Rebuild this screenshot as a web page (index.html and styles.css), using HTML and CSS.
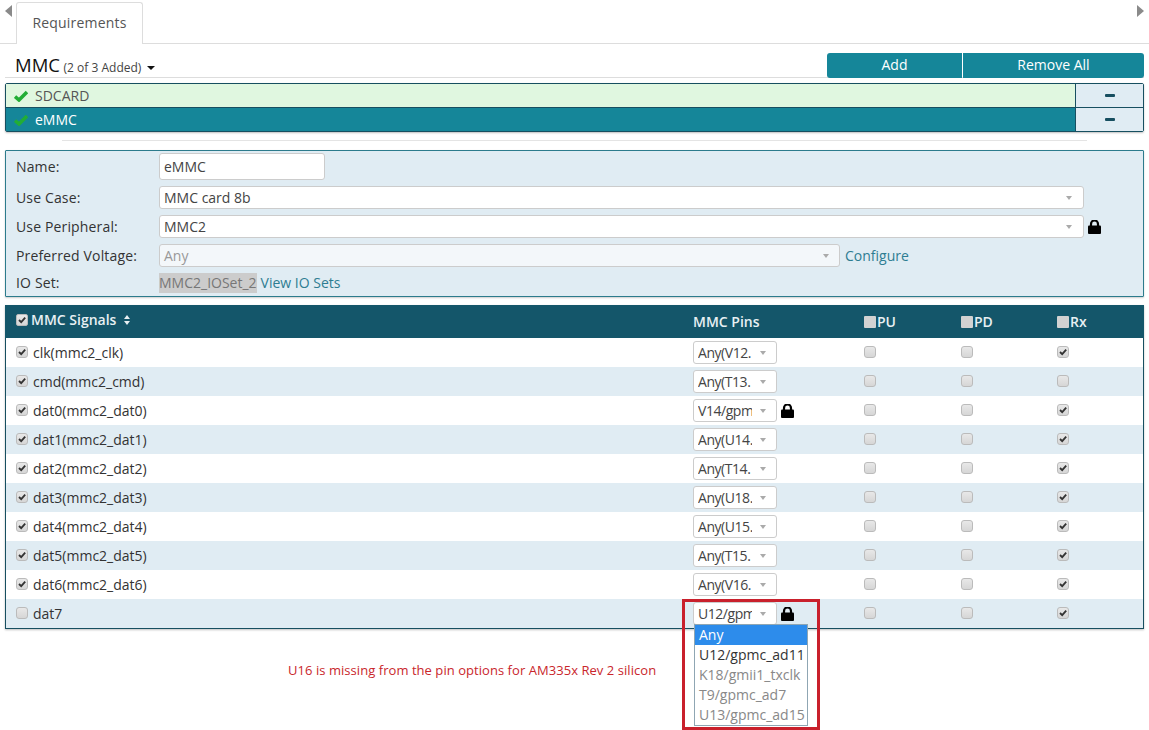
FILE: index.html
```html
<!DOCTYPE html>
<html lang="en">
<head>
<meta charset="utf-8">
<title>Requirements</title>
<link rel="stylesheet" href="styles.css">
</head>
<body>
<nav class="tabs">
  <span class="arrow arrow-left"></span>
  <div class="tab">Requirements</div>
  <span class="arrow arrow-right"></span>
</nav>

<main class="page">
  <header class="title-row">
    <div class="title"><span class="title-main">MMC</span> <span class="title-sub">(2 of 3 Added)</span><span class="caret"></span></div>
    <div class="actions">
      <button class="btn btn-add">Add</button>
      <button class="btn btn-remove">Remove All</button>
    </div>
  </header>

  <section class="list">
    <div class="list-row ok">
      <div class="list-name"><svg class="tick" viewBox="0 0 14 12"><path d="M1 6.5 L5 10 L13 2" fill="none" stroke="#22ad36" stroke-width="3.6"/></svg>SDCARD</div>
      <div class="list-minus"><span class="minus"></span></div>
    </div>
    <div class="list-row selected">
      <div class="list-name"><svg class="tick" viewBox="0 0 14 12"><path d="M1 6.5 L5 10 L13 2" fill="none" stroke="#22ad36" stroke-width="3.6"/></svg>eMMC</div>
      <div class="list-minus"><span class="minus"></span></div>
    </div>
  </section>

  <hr class="divider">

  <section class="form">
    <label class="form-label label-top">Name:</label>
    <div class="form-field field-top"><div class="text-input">eMMC</div></div>
    <label class="form-label">Use Case:</label>
    <div class="form-field"><div class="select wide">MMC card 8b<span class="sel-caret"></span></div></div>
    <label class="form-label">Use Peripheral:</label>
    <div class="form-field"><div class="select wide">MMC2<span class="sel-caret"></span></div><svg class="lock" viewBox="0 0 13 14"><path d="M3 6.5V4a3.5 3.5 0 0 1 7 0V6.5" fill="none" stroke="#000" stroke-width="2.2"/><rect y="5.5" width="13" height="8.5" rx="1" fill="#000"/></svg></div>
    <label class="form-label">Preferred Voltage:</label>
    <div class="form-field"><div class="select volt disabled">Any<span class="sel-caret"></span></div><a class="link configure">Configure</a></div>
    <label class="form-label">IO Set:</label>
    <div class="form-field"><span class="ioset-value">MMC2_IOSet_2</span><a class="link view-sets">View IO Sets</a></div>
  </section>

  <section class="signals">
    <div class="sig-head">
      <div class="c-name head-name"><input type="checkbox" class="cb head-cb" checked>MMC Signals<span class="sort"><i class="up"></i><i class="down"></i></span></div>
      <div class="c-pin">MMC Pins</div>
      <div class="c-flag"><span class="head-box"></span>PU</div>
      <div class="c-flag"><span class="head-box"></span>PD</div>
      <div class="c-flag"><span class="head-box"></span>Rx</div>
    </div>

    <div class="sig-row">
      <div class="c-name"><input type="checkbox" class="cb" checked>clk(mmc2_clk)</div>
      <div class="c-pin"><div class="select pin"><span class="pin-text">Any(V12.</span><span class="sel-caret"></span></div></div>
      <div class="c-flag"><input type="checkbox" class="cb"></div>
      <div class="c-flag"><input type="checkbox" class="cb"></div>
      <div class="c-flag"><input type="checkbox" class="cb" checked></div>
    </div>
    <div class="sig-row">
      <div class="c-name"><input type="checkbox" class="cb" checked>cmd(mmc2_cmd)</div>
      <div class="c-pin"><div class="select pin"><span class="pin-text">Any(T13.</span><span class="sel-caret"></span></div></div>
      <div class="c-flag"><input type="checkbox" class="cb"></div>
      <div class="c-flag"><input type="checkbox" class="cb"></div>
      <div class="c-flag"><input type="checkbox" class="cb"></div>
    </div>
    <div class="sig-row">
      <div class="c-name"><input type="checkbox" class="cb" checked>dat0(mmc2_dat0)</div>
      <div class="c-pin"><div class="select pin"><span class="pin-text">V14/gpmc</span><span class="sel-caret"></span></div><svg class="lock" viewBox="0 0 13 14"><path d="M3 6.5V4a3.5 3.5 0 0 1 7 0V6.5" fill="none" stroke="#000" stroke-width="2.2"/><rect y="5.5" width="13" height="8.5" rx="1" fill="#000"/></svg></div>
      <div class="c-flag"><input type="checkbox" class="cb"></div>
      <div class="c-flag"><input type="checkbox" class="cb"></div>
      <div class="c-flag"><input type="checkbox" class="cb" checked></div>
    </div>
    <div class="sig-row">
      <div class="c-name"><input type="checkbox" class="cb" checked>dat1(mmc2_dat1)</div>
      <div class="c-pin"><div class="select pin"><span class="pin-text">Any(U14.</span><span class="sel-caret"></span></div></div>
      <div class="c-flag"><input type="checkbox" class="cb"></div>
      <div class="c-flag"><input type="checkbox" class="cb"></div>
      <div class="c-flag"><input type="checkbox" class="cb" checked></div>
    </div>
    <div class="sig-row">
      <div class="c-name"><input type="checkbox" class="cb" checked>dat2(mmc2_dat2)</div>
      <div class="c-pin"><div class="select pin"><span class="pin-text">Any(T14.</span><span class="sel-caret"></span></div></div>
      <div class="c-flag"><input type="checkbox" class="cb"></div>
      <div class="c-flag"><input type="checkbox" class="cb"></div>
      <div class="c-flag"><input type="checkbox" class="cb" checked></div>
    </div>
    <div class="sig-row">
      <div class="c-name"><input type="checkbox" class="cb" checked>dat3(mmc2_dat3)</div>
      <div class="c-pin"><div class="select pin"><span class="pin-text">Any(U18.</span><span class="sel-caret"></span></div></div>
      <div class="c-flag"><input type="checkbox" class="cb"></div>
      <div class="c-flag"><input type="checkbox" class="cb"></div>
      <div class="c-flag"><input type="checkbox" class="cb" checked></div>
    </div>
    <div class="sig-row">
      <div class="c-name"><input type="checkbox" class="cb" checked>dat4(mmc2_dat4)</div>
      <div class="c-pin"><div class="select pin"><span class="pin-text">Any(U15.</span><span class="sel-caret"></span></div></div>
      <div class="c-flag"><input type="checkbox" class="cb"></div>
      <div class="c-flag"><input type="checkbox" class="cb"></div>
      <div class="c-flag"><input type="checkbox" class="cb" checked></div>
    </div>
    <div class="sig-row">
      <div class="c-name"><input type="checkbox" class="cb" checked>dat5(mmc2_dat5)</div>
      <div class="c-pin"><div class="select pin"><span class="pin-text">Any(T15.</span><span class="sel-caret"></span></div></div>
      <div class="c-flag"><input type="checkbox" class="cb"></div>
      <div class="c-flag"><input type="checkbox" class="cb"></div>
      <div class="c-flag"><input type="checkbox" class="cb" checked></div>
    </div>
    <div class="sig-row">
      <div class="c-name"><input type="checkbox" class="cb" checked>dat6(mmc2_dat6)</div>
      <div class="c-pin"><div class="select pin"><span class="pin-text">Any(V16.</span><span class="sel-caret"></span></div></div>
      <div class="c-flag"><input type="checkbox" class="cb"></div>
      <div class="c-flag"><input type="checkbox" class="cb"></div>
      <div class="c-flag"><input type="checkbox" class="cb" checked></div>
    </div>
    <div class="sig-row">
      <div class="c-name"><input type="checkbox" class="cb">dat7</div>
      <div class="c-pin open-host">
        <div class="select pin"><span class="pin-text">U12/gpmc</span><span class="sel-caret"></span></div><svg class="lock" viewBox="0 0 13 14"><path d="M3 6.5V4a3.5 3.5 0 0 1 7 0V6.5" fill="none" stroke="#000" stroke-width="2.2"/><rect y="5.5" width="13" height="8.5" rx="1" fill="#000"/></svg>
        <ul class="menu">
          <li class="active">Any</li>
          <li>U12/gpmc_ad11</li>
          <li class="muted">K18/gmii1_txclk</li>
          <li class="muted">T9/gpmc_ad7</li>
          <li class="muted">U13/gpmc_ad15</li>
        </ul>
      </div>
      <div class="c-flag"><input type="checkbox" class="cb"></div>
      <div class="c-flag"><input type="checkbox" class="cb"></div>
      <div class="c-flag"><input type="checkbox" class="cb" checked></div>
    </div>
  </section>
</main>

<div class="note">U16 is missing from the pin options for AM335x Rev 2 silicon</div>
<div class="red-box"></div>
</body>
</html>
```
FILE: styles.css
```css
* { box-sizing: border-box; }
html, body { margin: 0; padding: 0; }
body {
  position: relative;
  width: 1149px;
  height: 730px;
  overflow: hidden;
  background: #fff;
  color: #333;
  font-family: "Open Sans", "Noto Sans", sans-serif;
  font-size: 14px;
  line-height: 20px;
}

/* tab strip */
.tabs {
  display: flex;
  height: 44px;
  padding: 2px 5px 0;
  border-bottom: 1px solid #ddd;
}
.arrow { width: 0; height: 0; margin-top: 3px; border-style: solid; border-color: transparent; }
.arrow-left { border-width: 6px 7px 6px 0; border-right-color: #8a8a8a; }
.arrow-right { margin-left: auto; border-width: 6px 0 6px 7px; border-left-color: #8a8a8a; }
.tab {
  width: 127px;
  height: 42px;
  margin-left: 4px;
  padding-top: 10px;
  text-align: center;
  letter-spacing: .2px;
  color: #555;
  background: #fff;
  border: 1px solid #ddd;
  border-bottom: 0;
  border-radius: 3px 3px 0 0;
}

.page { padding: 0 5px; }

/* title row */
.title-row {
  display: flex;
  justify-content: space-between;
  height: 34px;
  border-bottom: 1px solid #ddd;
}
.title { padding: 9px 0 0 10px; color: #222; white-space: nowrap; line-height: 24px; }
.title-main { font-size: 18.5px; color: #111; }
.title-sub { font-size: 12px; color: #444; }
.caret {
  display: inline-block;
  margin-left: 6px;
  vertical-align: 2px;
  border-style: solid;
  border-color: #111 transparent transparent;
  border-width: 4px 4px 0;
}
.actions { display: flex; align-self: flex-end; gap: 1px; margin-bottom: -1px; }
.btn {
  height: 25px;
  padding: 0 0 2px;
  border: 0;
  color: #fff;
  background: #158699;
  font: 14px "Open Sans", sans-serif;
}
.btn-add { width: 135px; border-radius: 3px 0 0 3px; }
.btn-remove { width: 181px; border-radius: 0 3px 3px 0; }

/* requirement list */
.list {
  margin-top: 5px;
  border: 1px solid #174f60;
  border-radius: 2px;
  box-shadow: 0 1px 2px rgba(0,0,0,.25);
}
.list-row { display: flex; height: 23px; }
.list-row + .list-row { height: 24px; border-top: 1px solid #174f60; }
.list-name { flex: 1; display: flex; align-items: center; padding-left: 8px; }
.tick { width: 14px; height: 12px; margin-right: 7px; }
.ok .list-name { background: #e0f7e0; color: #555; }
.selected .list-name { background: #158699; color: #fff; }
.list-minus {
  display: flex;
  align-items: center;
  justify-content: center;
  width: 68px;
  background: #e0ecf3;
  border-left: 1px solid #174f60;
}
.minus { width: 10px; height: 3px; background: #174f60; border-radius: 1px; }

.divider {
  height: 1px;
  margin: 8px 57px 9px;
  border: 0;
  background: #e4e4e4;
}

/* form */
.form {
  display: grid;
  grid-template-columns: 143px 1fr;
  grid-template-rows: 30px 29px 29px 29px 26px;
  height: 147px;
  padding: 2px 0 0 10px;
  background: #e0ecf3;
  border: 1px solid #2c7b8c;
  box-shadow: 0 1px 2px rgba(0,0,0,.2);
  border-radius: 1px;
}
.form-label { display: flex; align-items: center; color: #333; font-weight: 500; letter-spacing: .15px; }
.form-field { display: flex; align-items: center; }
.label-top { height: 27px; }
.field-top { align-items: flex-start; }
.text-input {
  width: 166px;
  height: 27px;
  padding: 3px 4px;
  background: #fff;
  border: 1px solid #ccc;
  border-radius: 3px;
  color: #444;
}
.select {
  position: relative;
  height: 23px;
  padding: 1px 4px;
  background: #fff;
  border: 1px solid #ccc;
  border-radius: 3px;
  color: #444;
  white-space: nowrap;
}
.wide { width: 925px; }
.volt { width: 681px; }
.disabled { background: #f3f7fa; color: #999; }
.sel-caret {
  position: absolute;
  top: 9px;
  right: 10px;
  border-style: solid;
  border-color: #aaa transparent transparent;
  border-width: 4px 3.5px 0;
}
.wide .sel-caret { right: 11px; }
.lock { width: 13px; height: 14px; margin-left: 4px; flex: none; }
.link { color: #2e7d92; }
.configure { margin-left: 5px; }
.view-sets { margin-left: 4px; }
.ioset-value { background: #ccc; color: #777; }

/* signals table */
.signals {
  margin-top: 8px;
  border: 1px solid #174f60;
  border-top: 0;
  box-shadow: 0 1px 2px rgba(0,0,0,.25);
}
.sig-head, .sig-row {
  display: grid;
  grid-template-columns: 687px 171px 97px 96px 1fr;
  align-items: center;
}
.sig-head {
  height: 33px;
  margin: 0 -1px;
  padding-left: 1px;
  background: #14566a;
  color: #e8f0f3;
  font-weight: 600;
}
.head-name { padding-bottom: 4px; }
.sig-row { height: 29px; }
.sig-row:nth-child(odd) { background: #e0ecf3; }
.c-name { display: flex; align-items: center; padding-left: 10px; }
.c-pin { display: flex; align-items: center; }
.c-flag { display: flex; align-items: center; }

.cb {
  appearance: none;
  -webkit-appearance: none;
  flex: none;
  width: 12px;
  height: 12px;
  margin: 0 5px 2px 0;
  background: linear-gradient(#e8e8e8, #d6d6d6);
  border: 1px solid #bbb;
  border-radius: 3px;
  background-position: center;
  background-repeat: no-repeat;
}
.cb:checked {
  background-image: url("data:image/svg+xml,%3Csvg xmlns='http://www.w3.org/2000/svg' viewBox='0 0 10 10'%3E%3Cpath d='M2 5 L4.2 7.2 L8.2 2.6' fill='none' stroke='%23333' stroke-width='1.8'/%3E%3C/svg%3E"), linear-gradient(#e8e8e8, #d6d6d6);
  background-size: 10px 10px, auto;
}
.head-cb { margin: 0 3px 0 0; border-radius: 2px; }
.head-box { width: 12px; height: 12px; margin-right: 1px; background: #d2d2d2; border-radius: 1px; }

.sort { display: inline-flex; flex-direction: column; gap: 2px; margin-left: 8px; }
.sort i { width: 0; height: 0; border-style: solid; border-color: transparent; }
.sort .up { border-width: 0 3.5px 4px; border-bottom-color: #e8f0f3; }
.sort .down { border-width: 4px 3.5px 0; border-top-color: #e8f0f3; }

.pin { width: 84px; }
.pin-text { display: block; width: 54px; overflow: hidden; letter-spacing: -.45px; }

/* overlays */
.open-host { position: relative; }
.menu {
  position: absolute;
  top: 22px;
  left: 1px;
  z-index: 2;
  width: 114px;
  margin: 0;
  padding: 0;
  list-style: none;
  background: #fff;
  border: 1px solid #8fa6b3;
  color: #333;
}
.menu li { height: 20px; padding-left: 4px; white-space: nowrap; }
.menu .active { background: #2d8ceb; color: #fff; }
.menu .muted { color: #888; }
.note {
  position: absolute;
  left: 288px;
  top: 660px;
  color: #c9262c;
  font-size: 13px;
  letter-spacing: .05px;
}
.red-box {
  position: absolute;
  left: 682px;
  top: 599px;
  z-index: 3;
  width: 138px;
  height: 131px;
  border: 3px solid #c9202c;
  pointer-events: none;
}
```
